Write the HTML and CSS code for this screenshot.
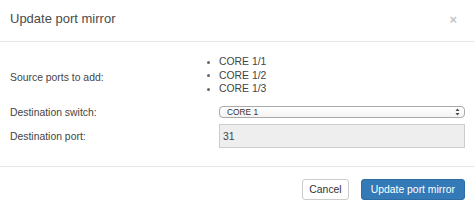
FILE: index.html
```html
<!DOCTYPE html>
<html lang="en">
<head>
  <meta charset="UTF-8" />
  <title>Update port mirror</title>
  <link rel="stylesheet" href="styles.css">
</head>
<body>

<div class="modal">
  <div class="modal-header">
    <h4 class="modal-title">Update port mirror</h4>
    <span class="close">&times;</span>
  </div>

  <div class="modal-body">
    <div class="form-row">
      <label class="form-label">Source ports to add:</label>
      <ul class="port-list">
        <li>CORE 1/1</li>
        <li>CORE 1/2</li>
        <li>CORE 1/3</li>
      </ul>
    </div>
    <div class="form-row">
      <label class="form-label">Destination switch:</label>
      <div class="select">
        <span>CORE 1</span>
        <svg class="arrows" width="5" height="8" viewBox="0 0 5 8">
          <path d="M2.5 0.5 L4.5 3 L0.5 3 Z M2.5 7.5 L4.5 5 L0.5 5 Z" fill="#444" />
        </svg>
      </div>
    </div>
    <div class="form-row">
      <label class="form-label">Destination port:</label>
      <div class="input">31</div>
    </div>
  </div>

  <div class="modal-footer">
    <button class="btn btn-default">Cancel</button>
    <button class="btn btn-primary">Update port mirror</button>
  </div>
</div>

</body>
</html>
```

FILE: styles.css
```css
body {
  margin: 0;
  background: #fff;
  font-family: 'Liberation Sans', Arial, sans-serif;
  color: #444;
}

.modal {
  width: 474px;
}

.modal-header {
  height: 42px;
  padding: 0 10px;
  border-bottom: 1px solid #e5e5e5;
  display: flex;
  align-items: center;
  justify-content: space-between;
  box-sizing: border-box;
}

.modal-title {
  margin: 0 0 4px 0;
  font-size: 13px;
  font-weight: normal;
  color: #4a4a4a;
}

.close {
  font-size: 13px;
  font-weight: bold;
  color: #c4c4c4;
  margin-right: 7px;
  margin-bottom: 2px;
}

.modal-body {
  padding: 13px 9px 12px 10px;
  font-size: 10.4px;
}

.form-row {
  display: flex;
  align-items: center;
  margin-bottom: 6px;
}

.form-label {
  width: 209px;
  flex: none;
}

.port-list {
  margin: 0 0 4px 0;
  padding: 0;
  list-style: none;
  line-height: 13.7px;
}

.port-list li {
  position: relative;
}

.port-list li::before {
  content: "";
  position: absolute;
  left: -12px;
  top: 5.5px;
  width: 3px;
  height: 3px;
  border-radius: 50%;
  background: #666;
}

.select {
  flex: 1;
  height: 12px;
  border: 1px solid #aaa;
  border-radius: 4px;
  box-sizing: border-box;
  display: flex;
  align-items: center;
  justify-content: space-between;
  padding: 0 4px 0 7px;
  font-size: 8.4px;
  color: #333;
  background: linear-gradient(#fff, #f3f3f3);
}

.input {
  flex: 1;
  height: 24px;
  border: 1px solid #ccc;
  background: #eee;
  box-sizing: border-box;
  display: flex;
  align-items: center;
  padding: 0 3px;
}

.modal-footer {
  border-top: 1px solid #e5e5e5;
  padding: 12px 9px 10px 10px;
  display: flex;
  justify-content: flex-end;
  gap: 12px;
}

.btn {
  height: 21px;
  font-family: 'Liberation Sans', Arial, sans-serif;
  font-size: 10.4px;
  border-radius: 3px;
  padding: 0 6px;
  cursor: pointer;
}

.btn-default {
  background: #fff;
  border: 1px solid #ccc;
  color: #333;
}

.btn-primary {
  background: #337ab7;
  border: 1px solid #2e6da4;
  color: #fff;
  padding: 0 9px;
}
```
